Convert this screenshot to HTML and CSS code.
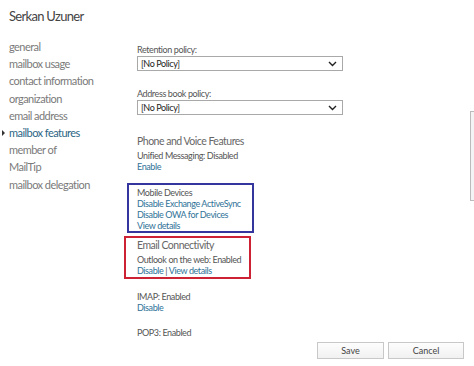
FILE: index.html
```html
<!DOCTYPE html>
<html>
<head>
<meta charset="utf-8">
<link rel="stylesheet" href="styles.css">
</head>
<body>
<div class="page">
  <header class="header">Serkan Uzuner</header>
  <div class="main">
    <nav class="nav">
      <div class="nav-item">general</div>
      <div class="nav-item">mailbox usage</div>
      <div class="nav-item">contact information</div>
      <div class="nav-item">organization</div>
      <div class="nav-item">email address</div>
      <div class="nav-item active"><span class="marker"></span>mailbox features</div>
      <div class="nav-item">member of</div>
      <div class="nav-item">MailTip</div>
      <div class="nav-item">mailbox delegation</div>
    </nav>
    <section class="content">
      <div class="field">
        <div class="label">Retention policy:</div>
        <div class="select"><span>[No Policy]</span><svg class="chev" width="9" height="6" viewBox="0 0 9 6"><polyline points="1,1 4.5,4.5 8,1" fill="none" stroke="#222" stroke-width="1.4"/></svg></div>
      </div>
      <div class="field field2">
        <div class="label">Address book policy:</div>
        <div class="select"><span>[No Policy]</span><svg class="chev" width="9" height="6" viewBox="0 0 9 6"><polyline points="1,1 4.5,4.5 8,1" fill="none" stroke="#222" stroke-width="1.4"/></svg></div>
      </div>
      <div class="group phone">
        <div class="heading">Phone and Voice Features</div>
        <div class="text">Unified Messaging: Disabled</div>
        <a class="link">Enable</a>
      </div>
      <div class="group box blue">
        <div class="text">Mobile Devices</div>
        <a class="link">Disable Exchange ActiveSync</a>
        <a class="link">Disable OWA for Devices</a>
        <a class="link">View details</a>
      </div>
      <div class="group box red">
        <div class="heading">Email Connectivity</div>
        <div class="text">Outlook on the web: Enabled</div>
        <div class="text"><a class="link inline">Disable</a> | <a class="link inline">View details</a></div>
      </div>
      <div class="group imap">
        <div class="text">IMAP: Enabled</div>
        <a class="link">Disable</a>
      </div>
      <div class="group pop">
        <div class="text">POP3: Enabled</div>
      </div>
    </section>
  </div>
  <footer class="footer">
    <button class="btn save">Save</button>
    <button class="btn cancel">Cancel</button>
  </footer>
  <div class="scrollbar"></div>
</div>
</body>
</html>
```

FILE: styles.css
```css
* { box-sizing: border-box; }
html, body { margin: 0; padding: 0; background: #fff; }
body { font-family: "Lato", "Noto Sans", sans-serif; color: #444; }
.page { position: relative; width: 474px; height: 366px; overflow: hidden; display: flex; flex-direction: column; }
.header { font-size: 13px; line-height: 20px; letter-spacing: -0.7px; color: #444; padding: 6px 0 0 9px; height: 38px; font-weight: 400; }
.main { display: flex; flex: 1; min-height: 0; }
.nav { width: 124px; padding-left: 9px; position: relative; }
.nav-item { font-size: 11px; line-height: 17.2px; letter-spacing: -0.55px; color: #7a7a7a; white-space: nowrap; position: relative; }
.nav-item.active { color: #2c6585; }
.marker { position: absolute; left: -7px; top: 6px; width: 0; height: 0; border-top: 3px solid transparent; border-bottom: 3px solid transparent; border-left: 3px solid #333; }
.content { flex: 1; padding-top: 5.5px; padding-left: 13px; }
.label, .text, .link { font-size: 9px; line-height: 11px; letter-spacing: -0.4px; white-space: nowrap; }
.label { color: #555; margin-bottom: 1.5px; }
.text { color: #555; }
.link { display: block; color: #2f7297; text-decoration: none; }
.link.inline { display: inline; }
.heading { font-size: 10.5px; line-height: 14px; letter-spacing: -0.5px; color: #666; }
.select { width: 206px; height: 15px; border: 1px solid #a9a9a9; display: flex; align-items: center; justify-content: space-between; padding: 0 5px 0 3px; font-size: 9px; letter-spacing: -0.4px; color: #222; }
.chev { display: block; }
.field2 { margin-top: 16.5px; }
.phone { margin-top: 19px; }
.phone .text { margin-top: 1.5px; }
.box { border-width: 2px; border-style: solid; }
.blue { border-color: #35359e; margin-left: -10px; width: 127px; margin-top: 11.5px; padding: 1.5px 0 0.5px 8px; }
.red { border-color: #cc2233; margin-left: -13px; width: 127px; margin-top: 3px; padding: 0 0 1.5px 11px; }
.red .text { margin-top: 1.5px; }
.red .text + .text { margin-top: 0; }
.imap { margin-top: 11.5px; }
.pop { margin-top: 14px; }
.footer { position: absolute; left: 317px; top: 342px; display: flex; gap: 4px; }
.btn { height: 17px; border: 1px solid #c8c8c8; background: linear-gradient(#fdfdfd, #f1f1f1); font-family: "Lato", sans-serif; font-size: 9px; color: #444; padding: 0; line-height: 15px; }
.save { width: 67px; }
.cancel { width: 76px; }
.scrollbar { position: absolute; left: 470px; top: 111px; width: 4px; height: 90px; border: 1px solid #bbb; border-right: none; background: #f4f4f4; }
```
